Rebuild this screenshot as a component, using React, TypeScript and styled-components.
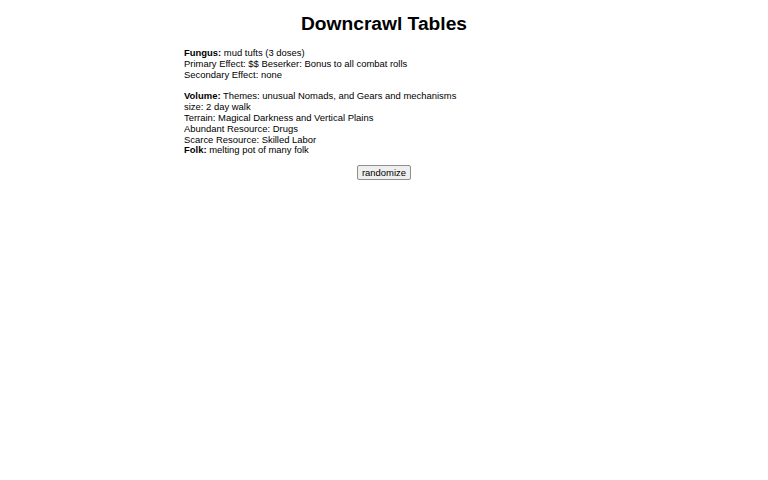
import { createGlobalStyle } from 'styled-components';
import styled from 'styled-components';

const GlobalStyle = createGlobalStyle`
    body {
        margin: 5px;
        background: #ffffff;
        color: #000000;
        font-family: 'Liberation Sans', Arial, sans-serif;
        font-size: 9.45px;
    }
`;

const Page = styled.div`
    display: flex;
    flex-direction: column;
    align-items: center;
`;

const Title = styled.h1`
    font-size: 19.2px;
    font-weight: bold;
    margin: 8px 0 13px;
    text-align: center;
`;

const Sheet = styled.div`
    width: 400px;
    display: flex;
    flex-direction: column;
`;

const Block = styled.p`
    margin: 0 0 11px;
    line-height: 10.8px;

    &:last-of-type {
        margin-bottom: 9px;
    }
`;

const Name = styled.b`
    font-weight: bold;
`;

const Actions = styled.div`
    display: flex;
    justify-content: center;
`;

const Button = styled.button`
    font-family: 'Liberation Sans', Arial, sans-serif;
    font-size: 9.45px;
    line-height: 11px;
    padding: 1px 4px;
    background: #efefef;
    border: 1px solid #8f8f8f;
    border-radius: 2px;
    color: #000000;
`;

const fungus = {
    name: 'mud tufts (3 doses)',
    primary: '$$ Beserker: Bonus to all combat rolls',
    secondary: 'none',
};

const volume = {
    themes: 'unusual Nomads, and Gears and mechanisms',
    size: '2 day walk',
    terrain: 'Magical Darkness and Vertical Plains',
    abundant: 'Drugs',
    scarce: 'Skilled Labor',
    folk: 'melting pot of many folk',
};

export default function App() {
    return (
        <Page>
            <GlobalStyle />
            <Title>Downcrawl Tables</Title>
            <Sheet>
                <Block>
                    <Name>Fungus:</Name> {fungus.name}
                    <br />
                    Primary Effect: {fungus.primary}
                    <br />
                    Secondary Effect: {fungus.secondary}
                </Block>
                <Block>
                    <Name>Volume:</Name> Themes: {volume.themes}
                    <br />
                    size: {volume.size}
                    <br />
                    Terrain: {volume.terrain}
                    <br />
                    Abundant Resource: {volume.abundant}
                    <br />
                    Scarce Resource: {volume.scarce}
                    <br />
                    <Name>Folk:</Name> {volume.folk}
                </Block>
                <Actions>
                    <Button type={'button'}>randomize</Button>
                </Actions>
            </Sheet>
        </Page>
    );
}
